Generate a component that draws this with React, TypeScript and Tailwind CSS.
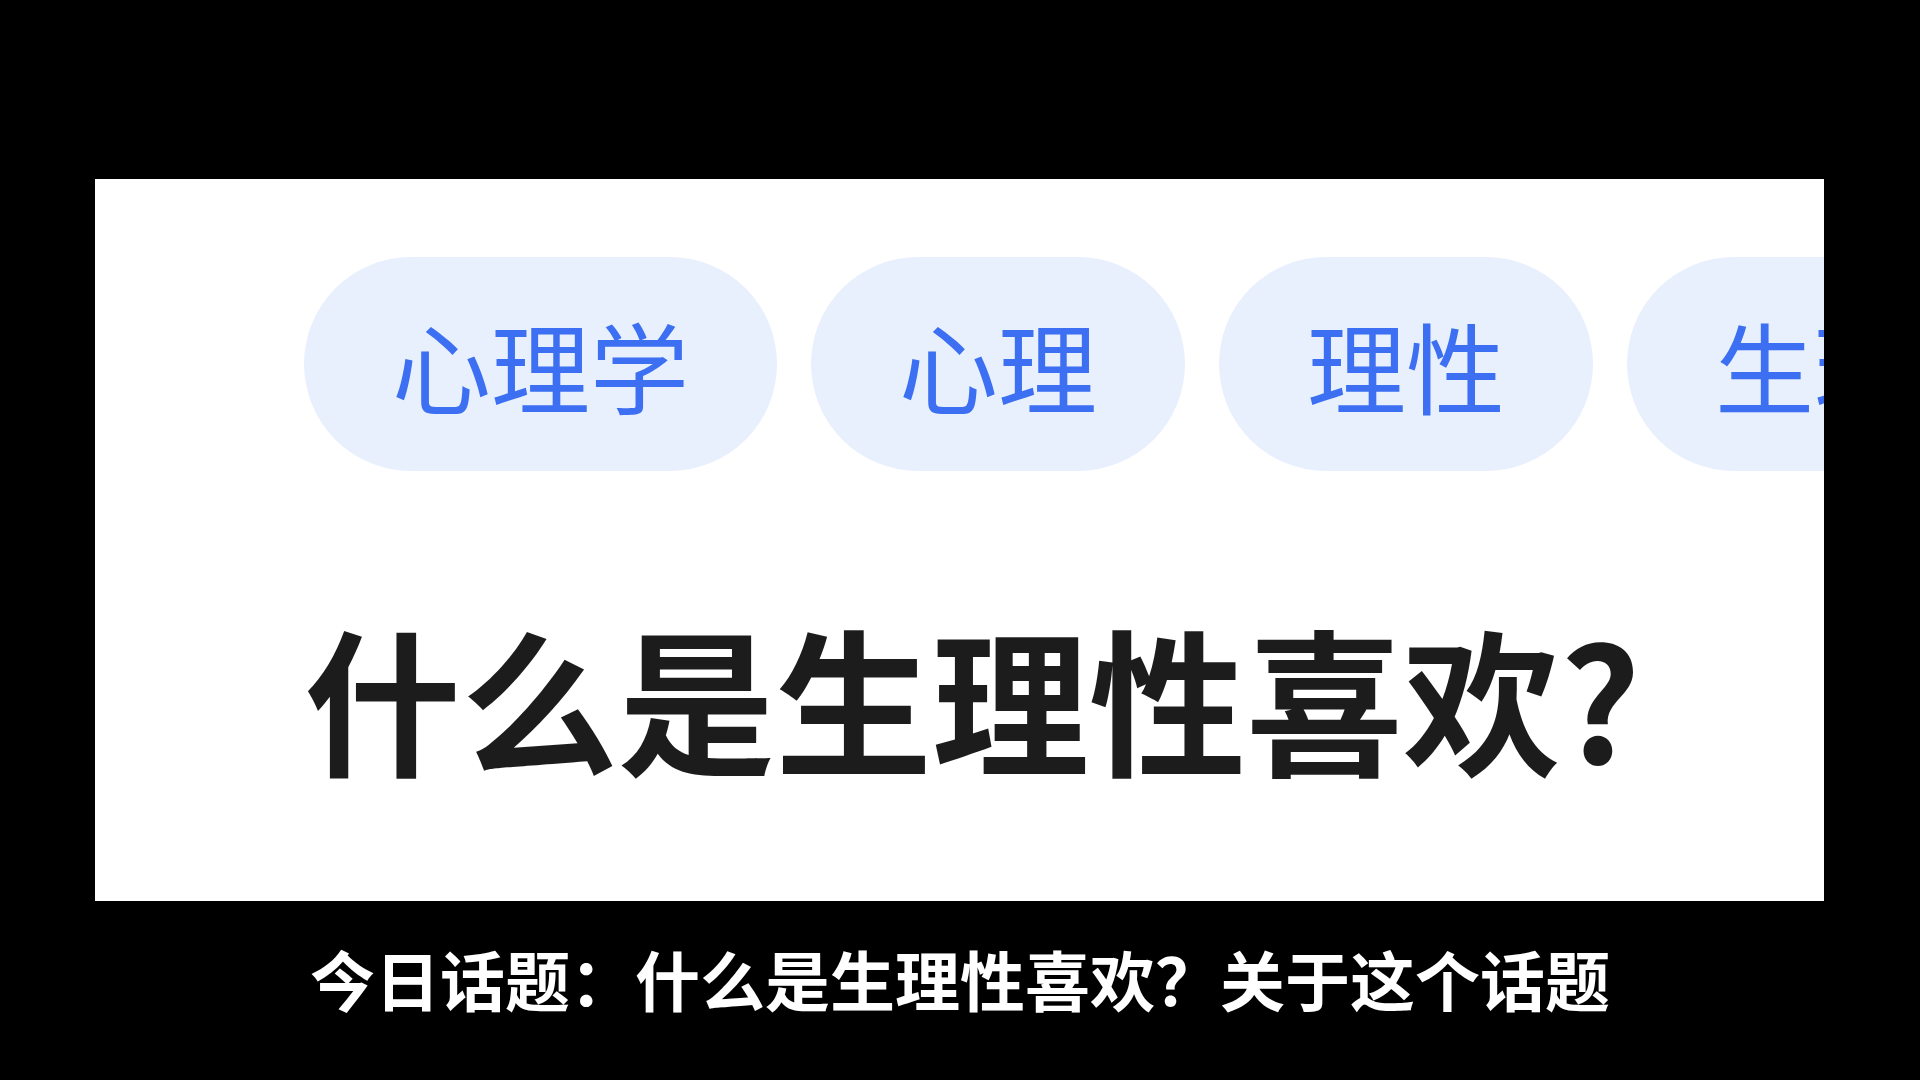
const tags = ['心理学', '心理', '理性', '生理'];

export default function App() {
  return (
    <div
      className="w-[1920px] h-[1080px] bg-black overflow-hidden flex flex-col"
      style={{ fontFamily: '"Noto Sans CJK SC", "Noto Sans", sans-serif' }}
    >
      {/* Screenshot panel */}
      <div className="mt-[179px] ml-[95px] w-[1729px] h-[722px] bg-white overflow-hidden pl-[209px] pt-[78px] flex flex-col">
        <div className="flex flex-nowrap gap-[34px]">
          {tags.map((t) => (
            <div
              key={t}
              className="shrink-0 h-[214px] px-[88px] rounded-full bg-[#e8f0fd] flex items-center"
            >
              <span className="text-[99px] leading-none text-[#3d6ff2]">{t}</span>
            </div>
          ))}
        </div>
        <h1 className="mt-[146px] text-[157px] leading-none font-bold text-[#1c1c1c] whitespace-nowrap">
          什么是生理性喜欢?
        </h1>
      </div>

      {/* Subtitle */}
      <div className="flex-1 flex items-center justify-center pb-[24px]">
        <p className="text-[65px] leading-none font-bold text-white whitespace-nowrap">
          今日话题：什么是生理性喜欢？关于这个话题
        </p>
      </div>
    </div>
  );
}
